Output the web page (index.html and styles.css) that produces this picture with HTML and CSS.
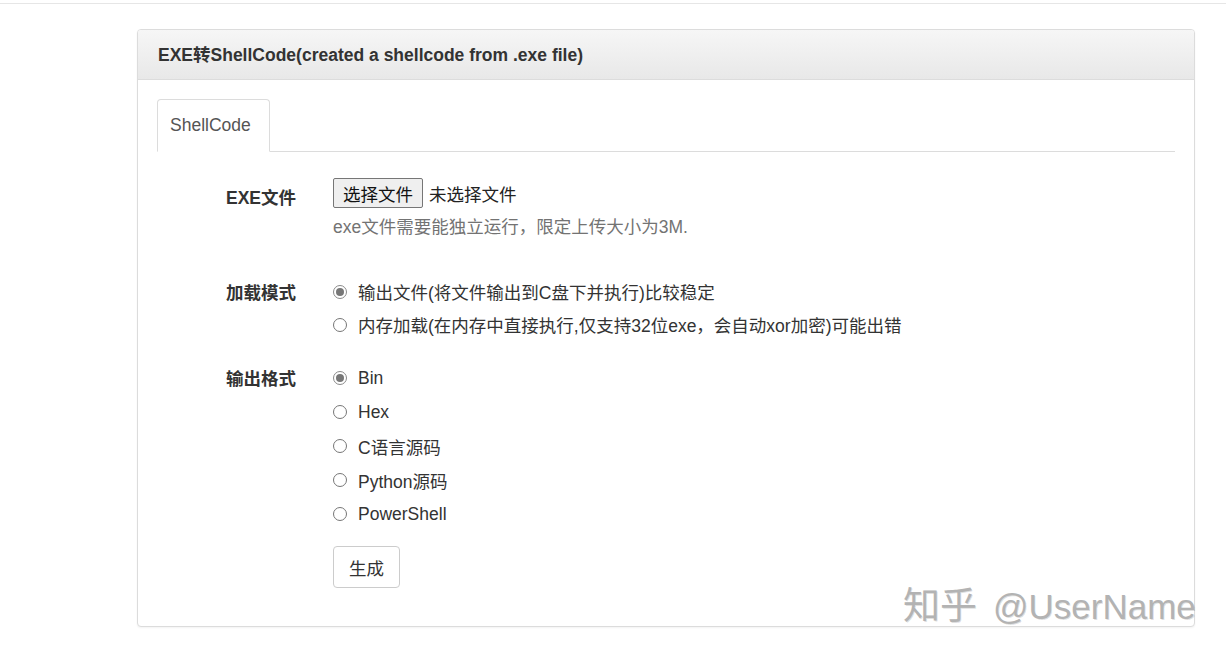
FILE: index.html
```html
<!DOCTYPE html>
<html lang="zh-CN">
<head>
<meta charset="utf-8">
<title>EXE转ShellCode</title>
<link rel="stylesheet" href="styles.css">
</head>
<body>
<div class="topline"></div>
<div class="panel">
  <div class="panel-heading">
    <h3 class="panel-title">EXE转ShellCode(created a shellcode from .exe file)</h3>
  </div>
  <div class="panel-body">
    <ul class="tabs">
      <li class="tab active">ShellCode</li>
    </ul>
    <form class="form">
      <div class="group group-file">
        <div class="label">EXE文件</div>
        <div class="control">
          <div class="file-line">
            <span class="file-btn">选择文件</span>
            <span class="file-name">未选择文件</span>
          </div>
          <p class="help">exe文件需要能独立运行，限定上传大小为3M.</p>
        </div>
      </div>
      <div class="group group-mode">
        <div class="label">加载模式</div>
        <div class="control">
          <label class="radio"><span class="dot checked"></span>输出文件(将文件输出到C盘下并执行)比较稳定</label>
          <label class="radio"><span class="dot"></span>内存加载(在内存中直接执行,仅支持32位exe，会自动xor加密)可能出错</label>
        </div>
      </div>
      <div class="group group-format">
        <div class="label">输出格式</div>
        <div class="control">
          <label class="radio"><span class="dot checked"></span>Bin</label>
          <label class="radio"><span class="dot"></span>Hex</label>
          <label class="radio"><span class="dot"></span>C语言源码</label>
          <label class="radio"><span class="dot"></span>Python源码</label>
          <label class="radio"><span class="dot"></span>PowerShell</label>
        </div>
      </div>
      <div class="group group-submit">
        <div class="label"></div>
        <div class="control">
          <span class="btn">生成</span>
        </div>
      </div>
    </form>
  </div>
</div>
<div class="watermark"><span class="wm-zh">知乎</span><span class="wm-en">@UserName</span></div>
</body>
</html>
```

FILE: styles.css
```css
html, body {
  margin: 0;
  padding: 0;
  background: #fff;
}
body {
  font-family: "Liberation Sans", "Noto Sans CJK SC", sans-serif;
  font-size: 17.5px;
  color: #333;
  position: relative;
  min-height: 655px;
}
.topline {
  height: 3px;
  border-bottom: 1px solid #e6e6e6;
}
.panel {
  margin: 25px 0 0 137px;
  width: 1056px;
  border: 1px solid #dcdcdc;
  border-radius: 4px;
  box-shadow: 0 1px 2px rgba(0,0,0,0.05);
  background: #fff;
}
.panel-heading {
  height: 50px;
  box-sizing: border-box;
  border-bottom: 1px solid #dcdcdc;
  background: linear-gradient(#f6f6f6, #e8e8e8);
  border-radius: 3px 3px 0 0;
  display: flex;
  align-items: center;
  padding: 0 20px 2px;
}
.panel-title {
  margin: 0;
  font-size: 17.5px;
  font-weight: bold;
  color: #333;
}
.panel-body {
  padding: 19px 19px 19px 19px;
}
.tabs {
  list-style: none;
  margin: 0;
  padding: 0;
  display: flex;
  border-bottom: 1px solid #dcdcdc;
}
.tab {
  margin-bottom: -1px;
  padding: 13px 18px 13px 12px;
  line-height: 25px;
  color: #555;
  border: 1px solid #dcdcdc;
  border-bottom-color: #fff;
  border-radius: 4px 4px 0 0;
  background: #fff;
}
.form {
  margin-top: 26px;
}
.group {
  display: flex;
  gap: 37px;
}
.label {
  width: 139px;
  flex: none;
  text-align: right;
  font-weight: bold;
  line-height: 25px;
  padding-top: 6px;
}
.group-file .label {
  padding-top: 8px;
}
.group-file {
  margin-bottom: 35px;
}
.group-mode {
  margin-bottom: 20px;
}
.group-format {
  margin-bottom: 14px;
}
.control {
  flex: 1;
}
.file-line {
  display: flex;
  align-items: center;
  height: 30px;
}
.file-btn {
  box-sizing: border-box;
  height: 30px;
  width: 90px;
  display: flex;
  align-items: center;
  justify-content: center;
  background: #efefef;
  border: 1px solid #767676;
  border-radius: 2px;
  color: #111;
}
.file-name {
  margin-left: 6px;
  color: #222;
}
.help {
  margin: 7px 0 0;
  line-height: 25px;
  color: #737373;
}
.radio {
  display: flex;
  align-items: center;
  height: 33px;
  color: #333;
}
.group-format .radio {
  height: 34px;
}
.dot {
  box-sizing: border-box;
  width: 14px;
  height: 14px;
  border: 1px solid #767676;
  border-radius: 50%;
  margin-right: 11px;
  flex: none;
  position: relative;
  background: #fff;
}
.dot.checked {
  border-color: #8a8a8a;
}
.dot.checked::after {
  content: "";
  position: absolute;
  left: 2px;
  top: 2px;
  width: 8px;
  height: 8px;
  border-radius: 50%;
  background: #777;
}
.btn {
  display: inline-flex;
  align-items: center;
  justify-content: center;
  box-sizing: border-box;
  width: 67px;
  height: 42px;
  border: 1px solid #ccc;
  border-radius: 4px;
  background: #fff;
  color: #333;
  margin-top: 1px;
  margin-bottom: 19px;
  vertical-align: top;
}
.group-submit .label {
  padding: 0;
}
.watermark {
  position: absolute;
  left: 903px;
  top: 589px;
  line-height: 36px;
  color: #b3b3b3;
  text-shadow: 1px 1px 0 rgba(0,0,0,0.12);
  white-space: nowrap;
  pointer-events: none;
  display: flex;
  align-items: baseline;
}
.wm-zh {
  font-size: 37px;
  margin-right: 16px;
}
.wm-en {
  font-size: 35px;
}
```
